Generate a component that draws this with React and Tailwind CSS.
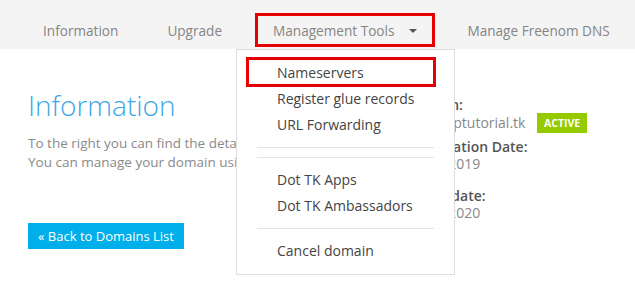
import React from 'react';

const menu = [
  { label: 'Nameservers' },
  { label: 'Register glue records' },
  { label: 'URL Forwarding' },
  { divider: true },
  { divider: true },
  { label: 'Dot TK Apps' },
  { label: 'Dot TK Ambassadors' },
  { divider: true },
  { label: 'Cancel domain' },
];

export default function App() {
  return (
    <div className="relative w-[635px] h-[287px] overflow-hidden bg-white font-['Open_Sans',sans-serif]">
      {/* top tabs */}
      <nav className="h-[49px] bg-[#f4f4f4] flex items-end pb-[9px] pl-[43px] text-[13.6px] leading-[18px] text-[#858585] whitespace-nowrap">
        <span>Information</span>
        <span className="ml-[49px]">Upgrade</span>
        <span className="ml-[51px] flex items-center">
          Management Tools
          <span className="ml-[15px] w-0 h-0 border-l-[4px] border-r-[4px] border-t-[4px] border-l-transparent border-r-transparent border-t-[#555]"></span>
        </span>
        <span className="ml-[50px]">Manage Freenom DNS</span>
      </nav>
      <div className="absolute left-[255px] top-[13px] w-[180px] h-[34px] border-[3px] border-[#e60000]"></div>

      <div className="flex">
        <div className="w-[392px] pl-[28px] pt-[39px]">
          <h1 className="text-[28px] leading-[34px] font-light text-[#3ea6e6]">Information</h1>
          <p className="mt-[12px] text-[13.5px] leading-[19px] text-[#8a8a8a] whitespace-nowrap">
            To the right you can find the details of your domain.<br />
            You can manage your domain using the tabs above.
          </p>
          <button className="mt-[51px] h-[26px] px-[10px] bg-[#00aeea] text-white text-[13px] leading-[26px]">
            « Back to Domains List
          </button>
        </div>

        <div className="flex-1 border-l border-[#eeeeee] pl-[13px] pt-[47px] text-[14px]">
          <div className="font-semibold text-[#555] leading-[17px]">Domain:</div>
          <div className="flex items-center">
            <span className="w-[131px] text-[#888] leading-[18px]">webhelptutorial.tk</span>
            <span className="h-[20px] px-[7px] bg-[#95c900] text-white text-[10.5px] font-bold leading-[20px]">ACTIVE</span>
          </div>
          <div className="mt-[5px] font-semibold text-[#555] leading-[17px]">Registration Date:</div>
          <div className="text-[#888] leading-[18px]">06/14/2019</div>
          <div className="mt-[14px] font-semibold text-[#555] leading-[17px]">Expiry date:</div>
          <div className="text-[#888] leading-[18px]">06/14/2020</div>
        </div>
      </div>

      {/* open dropdown */}
      <div className="absolute left-[236px] top-[49px] w-[219px] h-[226px] bg-white border border-[#dddddd] pt-[10px] text-[14px] text-[#444]">
        {menu.map((m, i) =>
          m.divider ? (
            <div key={i} className="mx-[20px] my-[9px] h-px bg-[#e5e5e5]"></div>
          ) : (
            <div key={i} className="h-[26px] leading-[26px] pl-[40px] whitespace-nowrap">{m.label}</div>
          )
        )}
        <div className="absolute left-[9px] top-[7px] w-[190px] h-[30px] border-[3px] border-[#e60000]"></div>
      </div>
    </div>
  );
}
